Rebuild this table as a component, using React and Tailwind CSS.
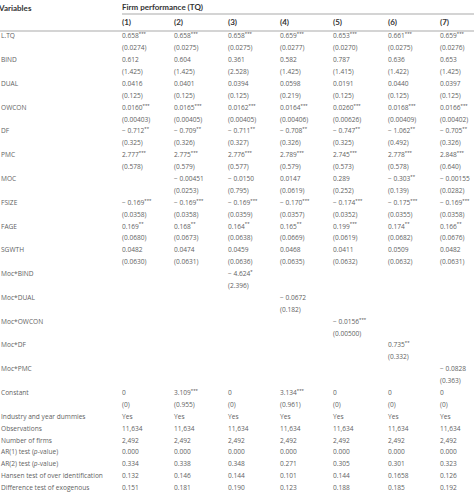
import React from 'react';

const cols = 'grid grid-cols-[122px_52px_54px_52px_53px_55px_52px_1fr]';

const rows = [
  ['L.TQ', ['0.658***', '0.658***', '0.658***', '0.659***', '0.653***', '0.661***', '0.659***']],
  ['', ['(0.0274)', '(0.0275)', '(0.0275)', '(0.0277)', '(0.0270)', '(0.0275)', '(0.0276)']],
  ['BIND', ['0.612', '0.604', '0.361', '0.582', '0.787', '0.636', '0.653']],
  ['', ['(1.425)', '(1.425)', '(2.528)', '(1.425)', '(1.415)', '(1.422)', '(1.425)']],
  ['DUAL', ['0.0416', '0.0401', '0.0394', '0.0598', '0.0191', '0.0440', '0.0397']],
  ['', ['(0.125)', '(0.125)', '(0.125)', '(0.219)', '(0.125)', '(0.125)', '(0.125)']],
  ['OWCON', ['0.0160***', '0.0165***', '0.0162***', '0.0164***', '0.0260***', '0.0168***', '0.0166***']],
  ['', ['(0.00403)', '(0.00405)', '(0.00405)', '(0.00406)', '(0.00626)', '(0.00409)', '(0.00402)']],
  ['DF', ['− 0.712**', '− 0.709**', '− 0.711**', '− 0.708**', '− 0.747**', '− 1.062**', '− 0.705**']],
  ['', ['(0.325)', '(0.326)', '(0.327)', '(0.326)', '(0.325)', '(0.492)', '(0.326)']],
  ['PMC', ['2.777***', '2.775***', '2.776***', '2.789***', '2.745***', '2.778***', '2.848***']],
  ['', ['(0.578)', '(0.579)', '(0.577)', '(0.579)', '(0.573)', '(0.578)', '(0.640)']],
  ['MOC', ['', '− 0.00451', '− 0.0150', '0.0147', '0.289', '− 0.303**', '− 0.00155']],
  ['', ['', '(0.0253)', '(0.795)', '(0.0619)', '(0.252)', '(0.139)', '(0.0282)']],
  ['FSIZE', ['− 0.169***', '− 0.169***', '− 0.169***', '− 0.170***', '− 0.174***', '− 0.175***', '− 0.169***']],
  ['', ['(0.0358)', '(0.0358)', '(0.0359)', '(0.0357)', '(0.0352)', '(0.0355)', '(0.0358)']],
  ['FAGE', ['0.169**', '0.168**', '0.164**', '0.165**', '0.199***', '0.174**', '0.166**']],
  ['', ['(0.0680)', '(0.0673)', '(0.0638)', '(0.0669)', '(0.0619)', '(0.0682)', '(0.0676)']],
  ['SGWTH', ['0.0482', '0.0474', '0.0459', '0.0468', '0.0411', '0.0509', '0.0482']],
  ['', ['(0.0630)', '(0.0631)', '(0.0636)', '(0.0635)', '(0.0632)', '(0.0632)', '(0.0631)']],
  ['Moc*BIND', ['', '', '− 4.624*', '', '', '', '']],
  ['', ['', '', '(2.396)', '', '', '', '']],
  ['Moc*DUAL', ['', '', '', '− 0.0672', '', '', '']],
  ['', ['', '', '', '(0.182)', '', '', '']],
  ['Moc*OWCON', ['', '', '', '', '− 0.0156***', '', '']],
  ['', ['', '', '', '', '(0.00500)', '', '']],
  ['Moc*DF', ['', '', '', '', '', '0.735**', '']],
  ['', ['', '', '', '', '', '(0.332)', '']],
  ['Moc*PMC', ['', '', '', '', '', '', '− 0.0828']],
  ['', ['', '', '', '', '', '', '(0.363)']],
  ['Constant', ['0', '3.109***', '0', '3.134***', '0', '0', '0']],
  ['', ['(0)', '(0.955)', '(0)', '(0.961)', '(0)', '(0)', '(0)']],
  ['Industry and year dummies', Array(7).fill('Yes')],
  ['Observations', Array(7).fill('11,634')],
  ['Number of firms', Array(7).fill('2,492')],
  ['AR1', Array(7).fill('0.000')],
  ['AR2', ['0.334', '0.338', '0.348', '0.271', '0.305', '0.301', '0.323']],
  ['Hansen test of over identification', ['0.132', '0.146', '0.144', '0.101', '0.144', '0.1658', '0.126']],
  ['Difference test of exogenous', ['0.151', '0.181', '0.190', '0.123', '0.188', '0.185', '0.192']],
];

function Cell({ v }) {
  const m = v.match(/^(.*?)(\*+)$/);
  if (!m) return <span>{v}</span>;
  return (
    <span>
      {m[1]}
      <sup className="font-['Liberation_Sans',sans-serif] text-[6px] top-[-0.35em]">{m[2]}</sup>
    </span>
  );
}

function Label({ t }) {
  if (t === 'AR1' || t === 'AR2') {
    return (
      <span>
        AR({t[2]}) test (<i>p</i>-value)
      </span>
    );
  }
  return <span>{t}</span>;
}

export default function App() {
  return (
    <div className="w-[474px] h-[495px] overflow-hidden bg-white font-['Open_Sans',sans-serif] text-[6.6px] text-[#5f5f5f]">
      <div className={`${cols} h-[15px] items-center font-bold text-[#333] text-[8px] font-['Lato',sans-serif]`}>
        <div className="-ml-[1px]">Variables</div>
        <div className="col-span-7 self-stretch flex items-center border-b-2 border-[#d4d4d4]">Firm performance (TQ)</div>
      </div>
      <div className={`${cols} h-[17px] items-center font-bold text-[#333] text-[8px] font-['Lato',sans-serif] border-b-2 border-[#d4d4d4]`}>
        <div></div>
        {[1, 2, 3, 4, 5, 6, 7].map(n => (
          <div key={n}>({n})</div>
        ))}
        <div></div>
      </div>
      <div>
        {rows.map(([label, vals], i) => (
          <div key={i} className={`${cols} h-[11.9px] items-center leading-none`}>
            <div className="pl-[1px] whitespace-nowrap"><Label t={label} /></div>
            {vals.map((v, j) => (
              <div key={j} className="whitespace-nowrap"><Cell v={v} /></div>
            ))}
            <div></div>
          </div>
        ))}
      </div>
    </div>
  );
}
